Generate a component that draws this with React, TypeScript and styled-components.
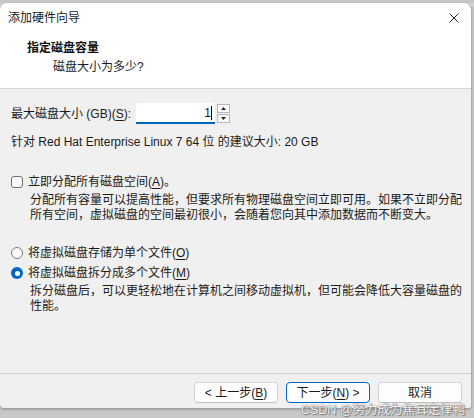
import React from "react";
import styled, { createGlobalStyle } from "styled-components";

const Global = createGlobalStyle`
  html, body { margin: 0; padding: 0; }
  body {
    width: 474px;
    height: 418px;
    overflow: hidden;
    background: #c6c6c6;
    font-family: "Liberation Sans", "Noto Sans CJK SC", sans-serif;
    font-size: 12px;
    color: #1b1b1b;
  }
`;

const Desktop = styled.div`
  position: relative;
  width: 474px;
  height: 418px;
  background: linear-gradient(#d2d2d2 0 3px, #c8c8c8 3px);
`;

const Window = styled.div`
  margin-top: 3px;
  width: 471px;
  height: 405px;
  display: flex;
  flex-direction: column;
  background: #f0f0f0;
  border-radius: 8px 8px 2px 4px;
  box-shadow: 0 2px 2px rgba(0, 0, 0, 0.18), 1px 0 2px rgba(0, 0, 0, 0.12);
  overflow: hidden;
`;

const TitleBar = styled.div`
  height: 30px;
  flex: none;
  background: #ffffff;
  display: flex;
  align-items: center;
  justify-content: space-between;
  padding: 0 12px 0 8px;
`;

const TitleText = styled.span`
  font-size: 12px;
  line-height: 16px;
  color: #1a1a1a;
`;

const CloseButton = styled.span`
  display: flex;
  width: 10px;
  height: 10px;
`;

const Header = styled.div`
  flex: none;
  background: #ffffff;
  padding: 7px 0 13px 27px;
  border-bottom: 1px solid #d4d4d4;
  display: flex;
  flex-direction: column;
  gap: 3px;
`;

const HeaderTitle = styled.div`
  font-weight: 700;
  line-height: 16px;
  color: #111;
`;

const HeaderSub = styled.div`
  line-height: 16px;
  padding-left: 26px;
`;

const Content = styled.div`
  flex: 1;
  padding: 14px 10px 0 11px;
  display: flex;
  flex-direction: column;
`;

const SizeRow = styled.div`
  display: flex;
  align-items: center;
  height: 21px;
`;

const Label = styled.span`
  line-height: 16px;
  width: 125px;
  flex: none;
`;

const Input = styled.div`
  width: 79px;
  height: 21px;
  box-sizing: border-box;
  background: #ffffff;
  border-bottom: 2px solid #0067c0;
  border-radius: 3px 3px 0 0;
  display: flex;
  justify-content: flex-end;
  align-items: center;
  padding-right: 3px;
  line-height: 16px;
`;

const Caret = styled.span`
  display: inline-block;
  width: 1px;
  height: 14px;
  background: #000;
`;

const Spinner = styled.div`
  margin-left: 2px;
  display: flex;
  flex-direction: column;
  gap: 1px;
`;

const SpinButton = styled.div`
  width: 13px;
  height: 9px;
  box-sizing: border-box;
  border: 1px solid #b8b8b8;
  background: #fafafa;
  display: flex;
  align-items: center;
  justify-content: center;
`;

const Line = styled.div<{ $mt?: number }>`
  line-height: 16px;
  margin-top: ${(p) => p.$mt ?? 0}px;
  white-space: nowrap;
`;

const OptionRow = styled.label<{ $mt?: number }>`
  display: flex;
  align-items: center;
  gap: 5px;
  height: 16px;
  margin-top: ${(p) => p.$mt ?? 0}px;
  line-height: 16px;
`;

const CheckBox = styled.span`
  width: 12px;
  height: 12px;
  box-sizing: border-box;
  border: 1px solid #6e6e6e;
  border-radius: 3px;
  background: #fbfbfb;
  flex: none;
`;

const Radio = styled.span<{ $checked?: boolean }>`
  width: 12px;
  height: 12px;
  box-sizing: border-box;
  border-radius: 50%;
  flex: none;
  display: flex;
  align-items: center;
  justify-content: center;
  background: ${(p) => (p.$checked ? "#0067c0" : "#fbfbfb")};
  border: ${(p) => (p.$checked ? "none" : "1px solid #7a7a7a")};
  &::after {
    content: "";
    display: ${(p) => (p.$checked ? "block" : "none")};
    width: 5px;
    height: 5px;
    border-radius: 50%;
    background: #ffffff;
  }
`;

const Desc = styled.div<{ $mt?: number }>`
  margin-top: ${(p) => p.$mt ?? 0}px;
  padding-left: 19px;
  line-height: 15px;
  width: 432px;
`;

const Footer = styled.div`
  flex: none;
  height: 35px;
  border-top: 1px solid #d0d0d0;
  display: flex;
  justify-content: flex-end;
  align-items: flex-start;
  gap: 8px;
  padding: 8px 9px 0 0;
  box-sizing: border-box;
`;

const Button = styled.button<{ $focused?: boolean }>`
  width: 84px;
  height: 21px;
  box-sizing: border-box;
  font: inherit;
  font-size: 12px;
  line-height: 16px;
  color: #1b1b1b;
  background: #fdfdfd;
  border: 1px solid ${(p) => (p.$focused ? "#0067c0" : "#d5d5d5")};
  border-bottom-color: ${(p) => (p.$focused ? "#0067c0" : "#c2c2c2")};
  border-radius: 4px;
  padding: 0;
  display: flex;
  align-items: center;
  justify-content: center;
`;

const U = styled.span`
  text-decoration: underline;
  text-underline-offset: 2px;
`;

const Watermark = styled.div`
  position: absolute;
  right: 9px;
  bottom: 4px;
  font-size: 12.5px;
  line-height: 14px;
  color: rgba(255, 255, 255, 0.92);
  text-shadow: 0 0 1px #7a7a7a, 0 0 1px #7a7a7a, 1px 1px 1px rgba(90, 90, 90, 0.7);
  white-space: nowrap;
`;

export default function App() {
  return (
    <Desktop>
      <Global />
      <Window>
        <TitleBar>
          <TitleText>添加硬件向导</TitleText>
          <CloseButton>
            <svg width="10" height="10" viewBox="0 0 10 10">
              <path d="M0.5 0.5 L9.5 9.5 M9.5 0.5 L0.5 9.5" stroke="#222" strokeWidth="1" fill="none" />
            </svg>
          </CloseButton>
        </TitleBar>
        <Header>
          <HeaderTitle>指定磁盘容量</HeaderTitle>
          <HeaderSub>磁盘大小为多少?</HeaderSub>
        </Header>
        <Content>
          <SizeRow>
            <Label>
              最大磁盘大小 (GB)(<U>S</U>):
            </Label>
            <Input>
              1<Caret />
            </Input>
            <Spinner>
              <SpinButton>
                <svg width="5" height="3" viewBox="0 0 5 3">
                  <path d="M2.5 0 L5 3 L0 3 Z" fill="#222" />
                </svg>
              </SpinButton>
              <SpinButton>
                <svg width="5" height="3" viewBox="0 0 5 3">
                  <path d="M0 0 L5 0 L2.5 3 Z" fill="#222" />
                </svg>
              </SpinButton>
            </Spinner>
          </SizeRow>
          <Line $mt={10}>针对 Red Hat Enterprise Linux 7 64 位 的建议大小: 20 GB</Line>
          <OptionRow $mt={24}>
            <CheckBox />
            <span>
              立即分配所有磁盘空间(<U>A</U>)。
            </span>
          </OptionRow>
          <Desc $mt={3}>
            分配所有容量可以提高性能，但要求所有物理磁盘空间立即可用。如果不立即分配所有空间，虚拟磁盘的空间最初很小，会随着您向其中添加数据而不断变大。
          </Desc>
          <OptionRow $mt={22}>
            <Radio />
            <span>
              将虚拟磁盘存储为单个文件(<U>O</U>)
            </span>
          </OptionRow>
          <OptionRow $mt={4}>
            <Radio $checked />
            <span>
              将虚拟磁盘拆分成多个文件(<U>M</U>)
            </span>
          </OptionRow>
          <Desc $mt={3}>
            拆分磁盘后，可以更轻松地在计算机之间移动虚拟机，但可能会降低大容量磁盘的性能。
          </Desc>
        </Content>
        <Footer>
          <Button>
            &lt; 上一步(<U>B</U>)
          </Button>
          <Button $focused>
            下一步(<U>N</U>) &gt;
          </Button>
          <Button>取消</Button>
        </Footer>
      </Window>
      <Watermark>CSDN @努力成为焦耳定律鸭</Watermark>
    </Desktop>
  );
}
